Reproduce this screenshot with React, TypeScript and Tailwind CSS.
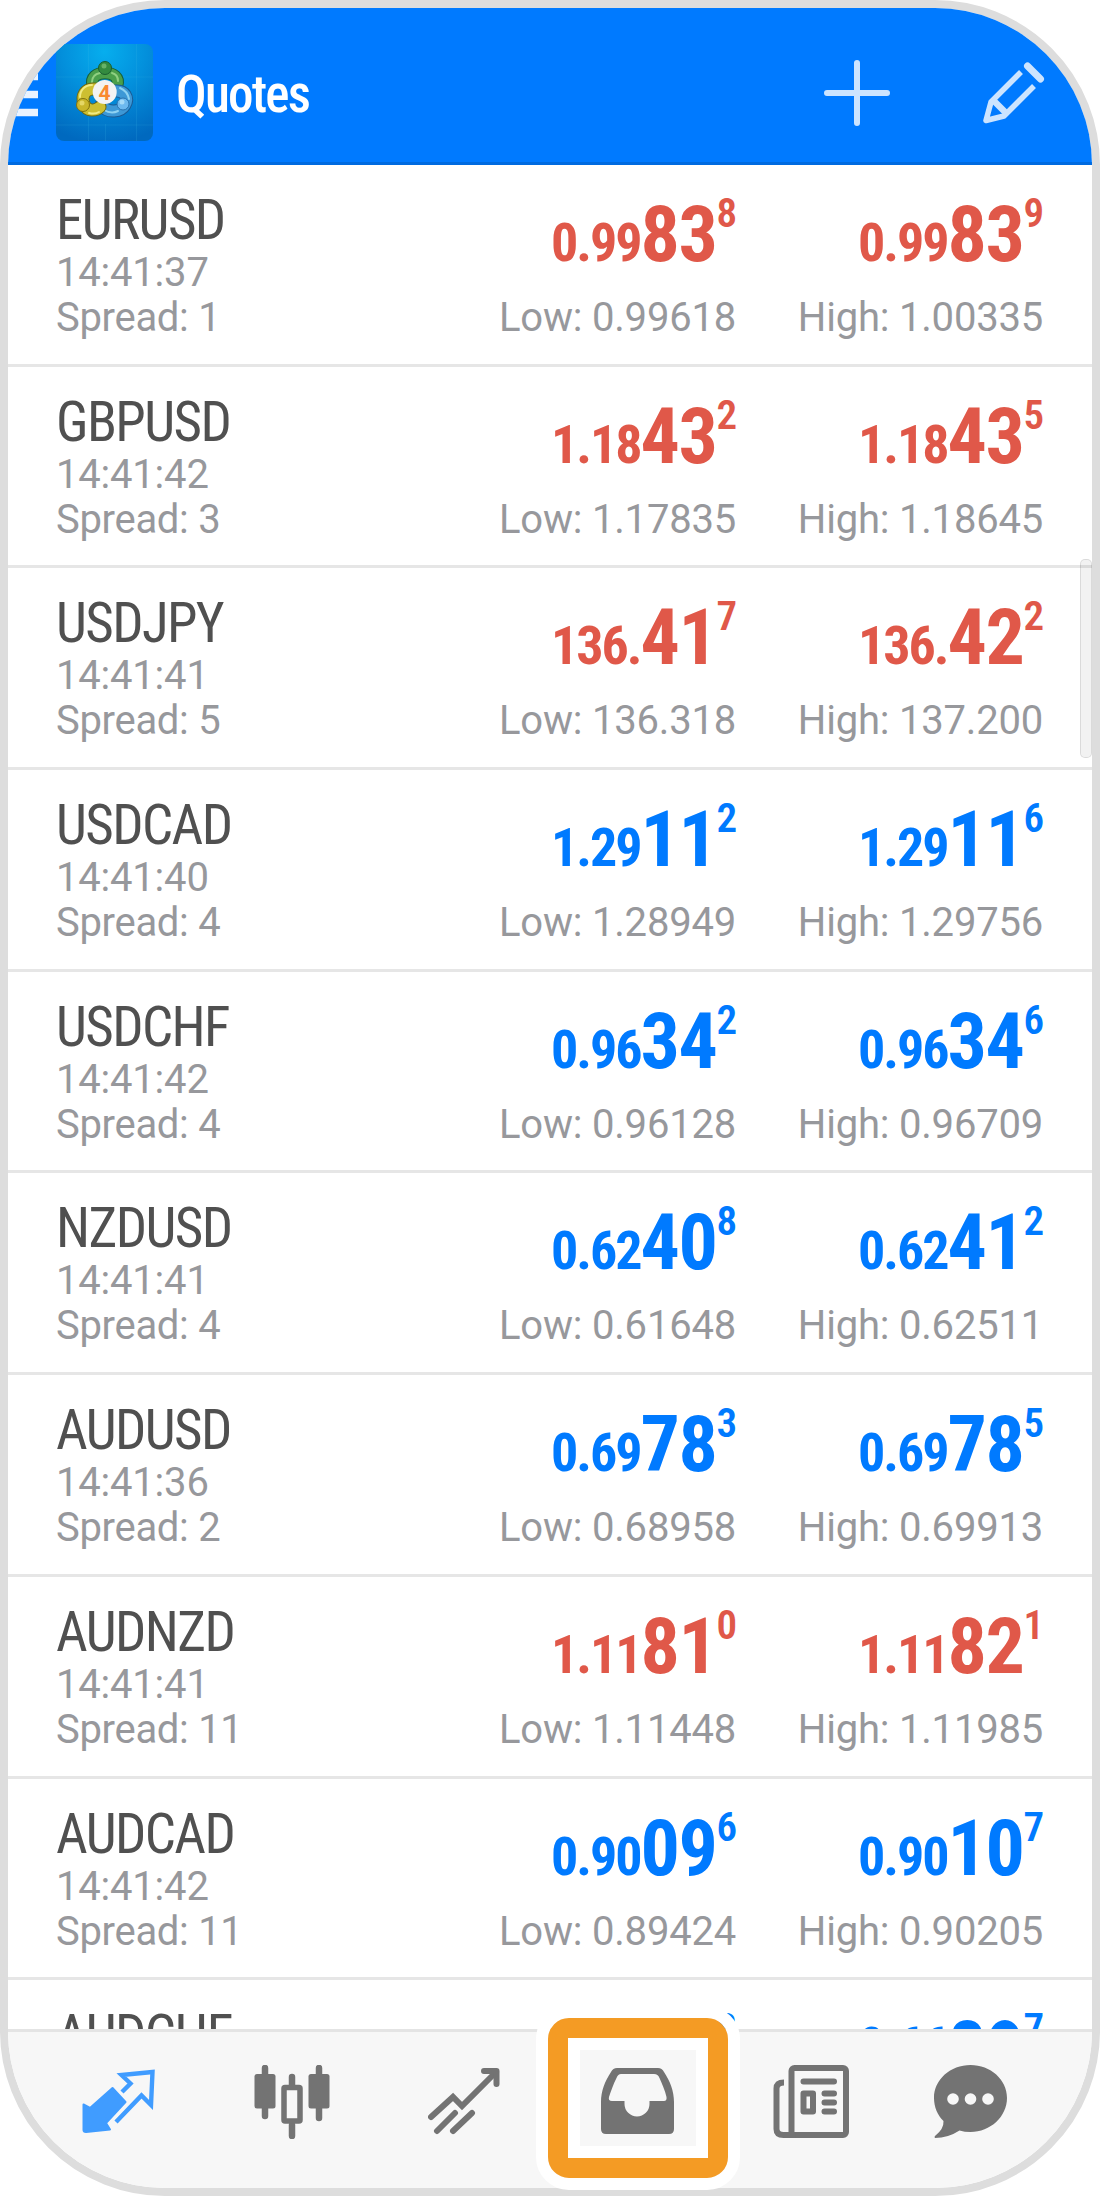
import React from "react";

type PriceParts = [string, string, string];

type Quote = {
    symbol: string;
    time: string;
    spread: number;
    bid: PriceParts;
    ask: PriceParts;
    low: string;
    high: string;
    down?: boolean;
    raised?: boolean;
};

const QUOTES: Quote[] = [
    { symbol: "EURUSD", time: "14:41:37", spread: 1, bid: ["0.99", "83", "8"], ask: ["0.99", "83", "9"], low: "0.99618", high: "1.00335", down: true },
    { symbol: "GBPUSD", time: "14:41:42", spread: 3, bid: ["1.18", "43", "2"], ask: ["1.18", "43", "5"], low: "1.17835", high: "1.18645", down: true },
    { symbol: "USDJPY", time: "14:41:41", spread: 5, bid: ["136.", "41", "7"], ask: ["136.", "42", "2"], low: "136.318", high: "137.200", down: true },
    { symbol: "USDCAD", time: "14:41:40", spread: 4, bid: ["1.29", "11", "2"], ask: ["1.29", "11", "6"], low: "1.28949", high: "1.29756" },
    { symbol: "USDCHF", time: "14:41:42", spread: 4, bid: ["0.96", "34", "2"], ask: ["0.96", "34", "6"], low: "0.96128", high: "0.96709" },
    { symbol: "NZDUSD", time: "14:41:41", spread: 4, bid: ["0.62", "40", "8"], ask: ["0.62", "41", "2"], low: "0.61648", high: "0.62511" },
    { symbol: "AUDUSD", time: "14:41:36", spread: 2, bid: ["0.69", "78", "3"], ask: ["0.69", "78", "5"], low: "0.68958", high: "0.69913" },
    { symbol: "AUDNZD", time: "14:41:41", spread: 11, bid: ["1.11", "81", "0"], ask: ["1.11", "82", "1"], low: "1.11448", high: "1.11985", down: true },
    { symbol: "AUDCAD", time: "14:41:42", spread: 11, bid: ["0.90", "09", "6"], ask: ["0.90", "10", "7"], low: "0.89424", high: "0.90205" },
    { symbol: "AUDCHF", time: "14:41:42", spread: 9, bid: ["0.66", "88", "8"], ask: ["0.66", "89", "7"], low: "0.66124", high: "0.67105", raised: true },
];

const AppLogo = () => (
    <svg className="h-[97px] w-[97px] shrink-0" viewBox="0 0 97 97">
        <defs>
            <radialGradient id="tile" cx="50%" cy="8%" r="95%">
                <stop offset="0" stopColor="#06aeee" />
                <stop offset="0.45" stopColor="#0390dc" />
                <stop offset="1" stopColor="#0069bf" />
            </radialGradient>
        </defs>
        <rect width="97" height="97" rx="8" fill="url(#tile)" />
        <path d="M32.500 0v97M80.500 0v97M49.500 80v17M0 33h97M0 81h97" stroke="#4cc0ee" strokeOpacity="0.15" />
        <g fill="none" strokeLinecap="round">
            {/* green */}
            <path d="M37 42C34 33 41 29 49 29S64 33 61 42" stroke="#17603a" strokeWidth="12.500" />
            <path d="M37 42C34 33 41 29 49 29S64 33 61 42" stroke="#4a9f4b" strokeWidth="10.500" />
            <path d="M36 38c0-5 3-8 8-9M56 29c4 1 6 4 6 8" stroke="#8fcf80" strokeWidth="2" />
            {/* blue */}
            <path d="M59 47C69 46 73 54 69 61S52 70 45 61" stroke="#1b5a93" strokeWidth="13" />
            <path d="M59 47C69 46 73 54 69 61S52 70 45 61" stroke="#3d98d6" strokeWidth="11" />
            <path d="M64 44c5 2 8 6 9 11M48 66c5 3 10 3 14 1" stroke="#8ed2f2" strokeWidth="2" />
            {/* yellow */}
            <path d="M39 45C29 44 25 52 28 60S40 67 44 63" stroke="#6f6a12" strokeWidth="13" />
            <path d="M39 45C29 44 25 52 28 60S40 67 44 63" stroke="#cdbf31" strokeWidth="11" />
            <path d="M36 41c-7 0-12 5-12 12M33 69c4 1 7 1 10-1" stroke="#f1ea83" strokeWidth="2" />
        </g>
        <circle cx="49" cy="24" r="6.500" fill="#338b3f" stroke="#195e30" />
        <circle cx="48" cy="22" r="2.500" fill="#67b267" />
        <circle cx="27" cy="61" r="6.500" fill="#c9b62a" stroke="#80700e" />
        <circle cx="26" cy="59" r="2.500" fill="#e5d765" />
        <circle cx="67" cy="60" r="6" fill="#6db9ef" stroke="#2a72ae" />
        <circle cx="66" cy="58" r="2.500" fill="#a5daf8" />
        <circle cx="48.700" cy="48" r="12" fill="#f3f3f3" />
        <text x="48.500" y="55.500" textAnchor="middle" fill="#f98a31" className="font-['Roboto',sans-serif] text-[21px] font-bold">4</text>
    </svg>
);

const MenuIcon = () => (
    <svg className="mt-[5px] h-[55px] w-[38px] shrink-0" viewBox="0 0 38 55">
        <path d="M0 9.500h38M0 27.500h38M0 45.500h38" stroke="#eaf3ff" strokeWidth="7.500" />
    </svg>
);

const PlusIcon = () => (
    <svg className="h-[66px] w-[66px]" viewBox="0 0 66 66">
        <path d="M33 3v60M3 33h60" stroke="#cce4ff" strokeWidth="6" strokeLinecap="round" />
    </svg>
);

const PencilIcon = () => (
    <svg className="h-[62px] w-[62px]" viewBox="0 0 62 62" fill="none" stroke="#cce4ff" strokeWidth="5.500">
        <path d="M38 10 8 40 3 58.500 21 54 51 24" strokeLinejoin="round" />
        <path d="m11 39 11 11" strokeWidth="6.500" />
        <path d="m44.500 4 13 13" strokeWidth="7" strokeLinecap="round" />
    </svg>
);

const QuotesIcon = () => (
    <svg className="h-[64px] w-[74px]" viewBox="0 0 74 64">
        <path d="M1.500 35.500 8 39 30.500 19 43.500 33 24 54l4 6.500L4 63Q1.500 63 1.500 61z" fill="#409cff" stroke="#409cff" strokeWidth="2" strokeLinejoin="round" />
        <path d="m40 23 8.500-8.500L39.500 6l31-3-1.500 33-9.500-9.500L34 53" fill="none" stroke="#409cff" strokeWidth="4.400" />
    </svg>
);

const ChartIcon = () => (
    <svg className="h-[74px] w-[76px]" viewBox="0 0 76 74">
        <path d="M11 3v48M38 12v10M38 60v11M65 3v50" stroke="#737373" strokeWidth="6.500" strokeLinecap="round" />
        <rect x="0.500" y="9" width="21" height="34.500" rx="2.500" fill="#737373" />
        <rect x="54.500" y="9" width="21" height="34.500" rx="2.500" fill="#737373" />
        <rect x="30" y="22.500" width="16" height="33.500" rx="1" fill="#f7f7f7" stroke="#737373" strokeWidth="5.500" />
    </svg>
);

const TradeIcon = () => (
    <svg className="h-[67px] w-[72px]" viewBox="0 0 72 67" fill="none" stroke="#737373" strokeWidth="6">
        <path d="m3 49 22-20 9 9L68 4" strokeLinecap="round" />
        <path d="M56 3h12.500v13" strokeLinecap="round" strokeLinejoin="round" />
        <path d="m9 63 18-18M25 63l19-18" strokeLinecap="round" />
    </svg>
);

const InboxIcon = () => (
    <svg className="h-[66px] w-[73px]" viewBox="0 0 73 66">
        <path
            fillRule="evenodd"
            fill="#737373"
            d="M16 0h41q4 0 6 4c6 9 10 19 10 30v27q0 5-5 5H5q-5 0-5-5V34C0 23 4 13 10 4q2-4 6-4zM20 6q-3 0-4.500 4C12 17 10 23 8 29q-1 4 3 4h12.500v3a12.500 12.500 0 0 0 25 0v-3H63q3 0 2.500-4C64 22 61 16 58.500 10Q57 6 53 6z"
        />
    </svg>
);

const NewsIcon = () => (
    <svg className="h-[73px] w-[76px]" viewBox="0 0 76 73" fill="none" stroke="#737373" strokeWidth="6">
        <rect x="18.500" y="3" width="54.500" height="67" rx="3" />
        <path d="M11 17.500q-7.500 0-7.500 6V64q0 6 7 6h12" />
        <path d="M30.500 16.500H61M51.500 28.500H61M51.500 37.500H61M51.500 46.500H61" strokeLinecap="round" />
        <rect x="30.500" y="28.500" width="9.500" height="18" strokeWidth="6" strokeLinejoin="round" />
    </svg>
);

const ChatIcon = () => (
    <svg className="h-[73px] w-[73px]" viewBox="0 0 73 73">
        <path d="M36.500 0C56.500 0 73 14.500 73 33S56.500 67 36.500 67q-6 0-11-1.500Q14 73 1 73q-1-1 0-2 9-7 8.500-15C3.500 50 0 42 0 33 0 14.500 16.500 0 36.500 0z" fill="#737373" />
        <circle cx="19" cy="34" r="5.800" fill="#f7f7f7" />
        <circle cx="36.500" cy="34" r="5.800" fill="#f7f7f7" />
        <circle cx="54" cy="34" r="5.800" fill="#f7f7f7" />
    </svg>
);

const Price = ({ parts, down, raised }: { parts: PriceParts; down?: boolean; raised?: boolean }) => (
    <div className={`flex h-[73px] items-end justify-end font-['Roboto_Condensed',sans-serif] font-bold ${down ? "text-[#e05849]" : "text-[#007aff]"}`}>
        <span className={`text-[54px] leading-[54px] tracking-[-2px] ${raised ? "mb-[7px]" : "mb-[-4px]"}`}>{parts[0]}</span>
        <span className="mb-[-8px] text-[78px] leading-[78px] tracking-[-1.500px]">{parts[1]}</span>
        <span className="self-start text-[41px] leading-[41px] font-semibold tracking-normal">{parts[2]}</span>
    </div>
);

const QuoteRow = ({ quote }: { quote: Quote }) => (
    <div className="flex h-[201.700px] shrink-0 justify-between border-b-[3px] border-[#e6e6e6] pt-[28px] pr-[48px] pl-[48px] font-['Roboto',sans-serif] text-[40px] leading-[45px] tracking-[-0.200px] text-[#97989c]">
        <div className="w-[300px]">
            <div className="mb-[2px] font-['Roboto_Condensed',sans-serif] text-[55px] leading-[55px] tracking-[-1.600px] text-[#505050]">{quote.symbol}</div>
            <div>{quote.time}</div>
            <div className="tracking-[-0.300px]">Spread: {quote.spread}</div>
        </div>
        <div className="flex">
            <div className="w-[280px] text-right">
                <Price parts={quote.bid} down={quote.down} raised={quote.raised} />
                <div className="mt-[29px] pr-[1px]">Low: {quote.low}</div>
            </div>
            <div className="w-[307px] text-right">
                <Price parts={quote.ask} down={quote.down} raised={quote.raised} />
                <div className="mt-[29px] pr-[1px]">High: {quote.high}</div>
            </div>
        </div>
    </div>
);

const App: React.FC = () => {
    return (
        <div className="relative h-[2196px] w-[1100px] bg-white">
            <div className="flex h-full flex-col overflow-hidden rounded-[165px] border-8 border-[#ddd] bg-white">
                {/* header */}
                <header className="flex h-[157px] shrink-0 items-center border-b-[3px] border-[#006be0] bg-[#007aff] pt-[14px] text-white">
                    <div className="-ml-[8px] flex items-center">
                        <MenuIcon />
                        <div className="ml-[18px]">
                            <AppLogo />
                        </div>
                        <h1 className="mt-[5px] ml-[23px] font-['Roboto_Condensed',sans-serif] text-[51px] leading-none font-medium tracking-[-1.800px]">Quotes</h1>
                    </div>
                    <div className="mt-[1px] ml-auto flex items-center gap-[93px] pr-[47px]">
                        <PlusIcon />
                        <PencilIcon />
                    </div>
                </header>

                {/* quote list */}
                <main className="flex min-h-0 flex-1 flex-col overflow-hidden">
                    {QUOTES.map((quote) => (
                        <QuoteRow key={quote.symbol} quote={quote} />
                    ))}
                </main>

                {/* tab bar */}
                <nav className="flex h-[159px] shrink-0 items-start border-t-[3px] border-[#e4e4e4] bg-[#f7f7f7] pt-[33px] pl-[74px]">
                    <div className="w-[172px] pt-[4px]"><QuotesIcon /></div>
                    <div className="w-[174px]"><ChartIcon /></div>
                    <div className="w-[173px] pt-[3px]"><TradeIcon /></div>
                    <div className="w-[172px] pt-[3px]"><InboxIcon /></div>
                    <div className="w-[161px]"><NewsIcon /></div>
                    <div><ChatIcon /></div>
                </nav>
            </div>

            {/* scroll thumb */}
            <div className="absolute top-[559px] left-[1080px] h-[199px] w-[12px] rounded-[5px] border border-black/10 bg-black/5" />

            {/* highlight on the mailbox tab */}
            <div className="absolute top-[2006px] left-[536px] rounded-[33px] border-[12px] border-white">
                <div className="rounded-[21px] border-[20px] border-[#f49b24]">
                    <div className="h-[120px] w-[140px] border-[12px] border-white" />
                </div>
            </div>
        </div>
    );
};

export default App;
